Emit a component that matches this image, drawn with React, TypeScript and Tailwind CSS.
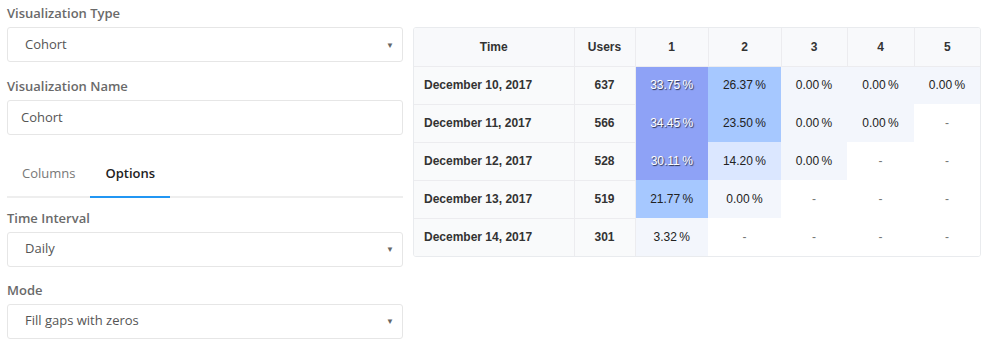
import React from 'react';

const rows = [
  { date: 'December 10, 2017', users: 637, values: ['33.75', '26.37', '0.00', '0.00', '0.00'] },
  { date: 'December 11, 2017', users: 566, values: ['34.45', '23.50', '0.00', '0.00', null] },
  { date: 'December 12, 2017', users: 528, values: ['30.11', '14.20', '0.00', null, null] },
  { date: 'December 13, 2017', users: 519, values: ['21.77', '0.00', null, null, null] },
  { date: 'December 14, 2017', users: 301, values: ['3.32', null, null, null, null] },
];

function cellClass(v: string | null) {
  if (v === null) return 'bg-white text-[#777]';
  const n = parseFloat(v);
  if (n >= 30) return 'bg-[#8ea2f6] text-white [text-shadow:1px_1px_1px_rgba(0,0,0,0.7)]';
  if (n >= 20) return 'bg-[#a6c8ff] text-[#222]';
  if (n >= 10) return 'bg-[#dbe7ff] text-[#222]';
  return 'bg-[#f3f6fc] text-[#222]';
}

function Select({ value }: { value: string }) {
  return (
    <div className="flex h-[35px] items-center justify-between rounded-[3px] border border-[#e6e6e6] bg-white pl-[17px] pr-[8px] text-[13px] text-[#555]">
      <span>{value}</span>
      <span className="text-[8px] text-[#666]">▼</span>
    </div>
  );
}

function Input({ value }: { value: string }) {
  return (
    <div className="flex h-[35px] items-center rounded-[3px] border border-[#e6e6e6] bg-white pl-[13px] text-[13px] text-[#555]">
      {value}
    </div>
  );
}

function Label({ children }: { children: React.ReactNode }) {
  return <div className="mb-[5px] text-[13px] leading-[18px] font-semibold text-[#6a6a6a]">{children}</div>;
}

export default function App() {
  return (
    <div className="flex gap-[10px] bg-white pl-[7px] pt-[4px] font-['Open_Sans',sans-serif]" style={{ width: 989, height: 351 }}>
      <div className="w-[396px] shrink-0">
        <Label>Visualization Type</Label>
        <Select value="Cohort" />
        <div className="mt-[15px]">
          <Label>Visualization Name</Label>
          <Input value="Cohort" />
        </div>
        <div className="mt-[29px] flex border-b-2 border-[#eeeeee] text-[13px]">
          <div className="px-[15px] pb-[12px] text-[#777]">Columns</div>
          <div className="-mb-[2px] border-b-2 border-[#2196f3] px-[15px] pb-[12px] font-semibold text-[#222]">Options</div>
        </div>
        <div className="mt-[11px]">
          <Label>Time Interval</Label>
          <Select value="Daily" />
        </div>
        <div className="mt-[14px]">
          <Label>Mode</Label>
          <Select value="Fill gaps with zeros" />
        </div>
      </div>
      <div className="mt-[23px] w-[568px] self-start overflow-hidden rounded-[3px] border border-[#e9ebee] font-['Liberation_Sans',sans-serif] text-[12px]">
        <table className="w-full table-fixed border-collapse">
          <colgroup>
            <col className="w-[160px]" />
            <col className="w-[61px]" />
            <col className="w-[73px]" />
            <col className="w-[73px]" />
            <col className="w-[66px]" />
            <col className="w-[67px]" />
            <col />
          </colgroup>
          <thead>
            <tr className="h-[38px] bg-[#f8f9fb] font-bold text-[#333]">
              <th className="border-b border-r border-[#ececef]">Time</th>
              <th className="border-b border-r border-[#ececef]">Users</th>
              <th className="border-b border-r border-[#ececef]">1</th>
              <th className="border-b border-r border-[#ececef]">2</th>
              <th className="border-b border-r border-[#ececef]">3</th>
              <th className="border-b border-r border-[#ececef]">4</th>
              <th className="border-b border-[#ececef]">5</th>
            </tr>
          </thead>
          <tbody>
            {rows.map((r, i) => (
              <tr key={r.date} className="h-[38px]">
                <td className={`bg-[#f9fafb] pl-[10px] font-bold text-[#333] border-r border-[#ececef] ${i < rows.length - 1 ? 'border-b' : ''}`}>{r.date}</td>
                <td className={`bg-[#f9fafb] text-center font-bold text-[#333] border-r border-[#ececef] ${i < rows.length - 1 ? 'border-b' : ''}`}>{r.users}</td>
                {r.values.map((v, j) => (
                  <td key={j} className={`text-center ${cellClass(v)}`}>
                    {v === null ? '-' : `${v}\u2009%`}
                  </td>
                ))}
              </tr>
            ))}
          </tbody>
        </table>
      </div>
    </div>
  );
}
